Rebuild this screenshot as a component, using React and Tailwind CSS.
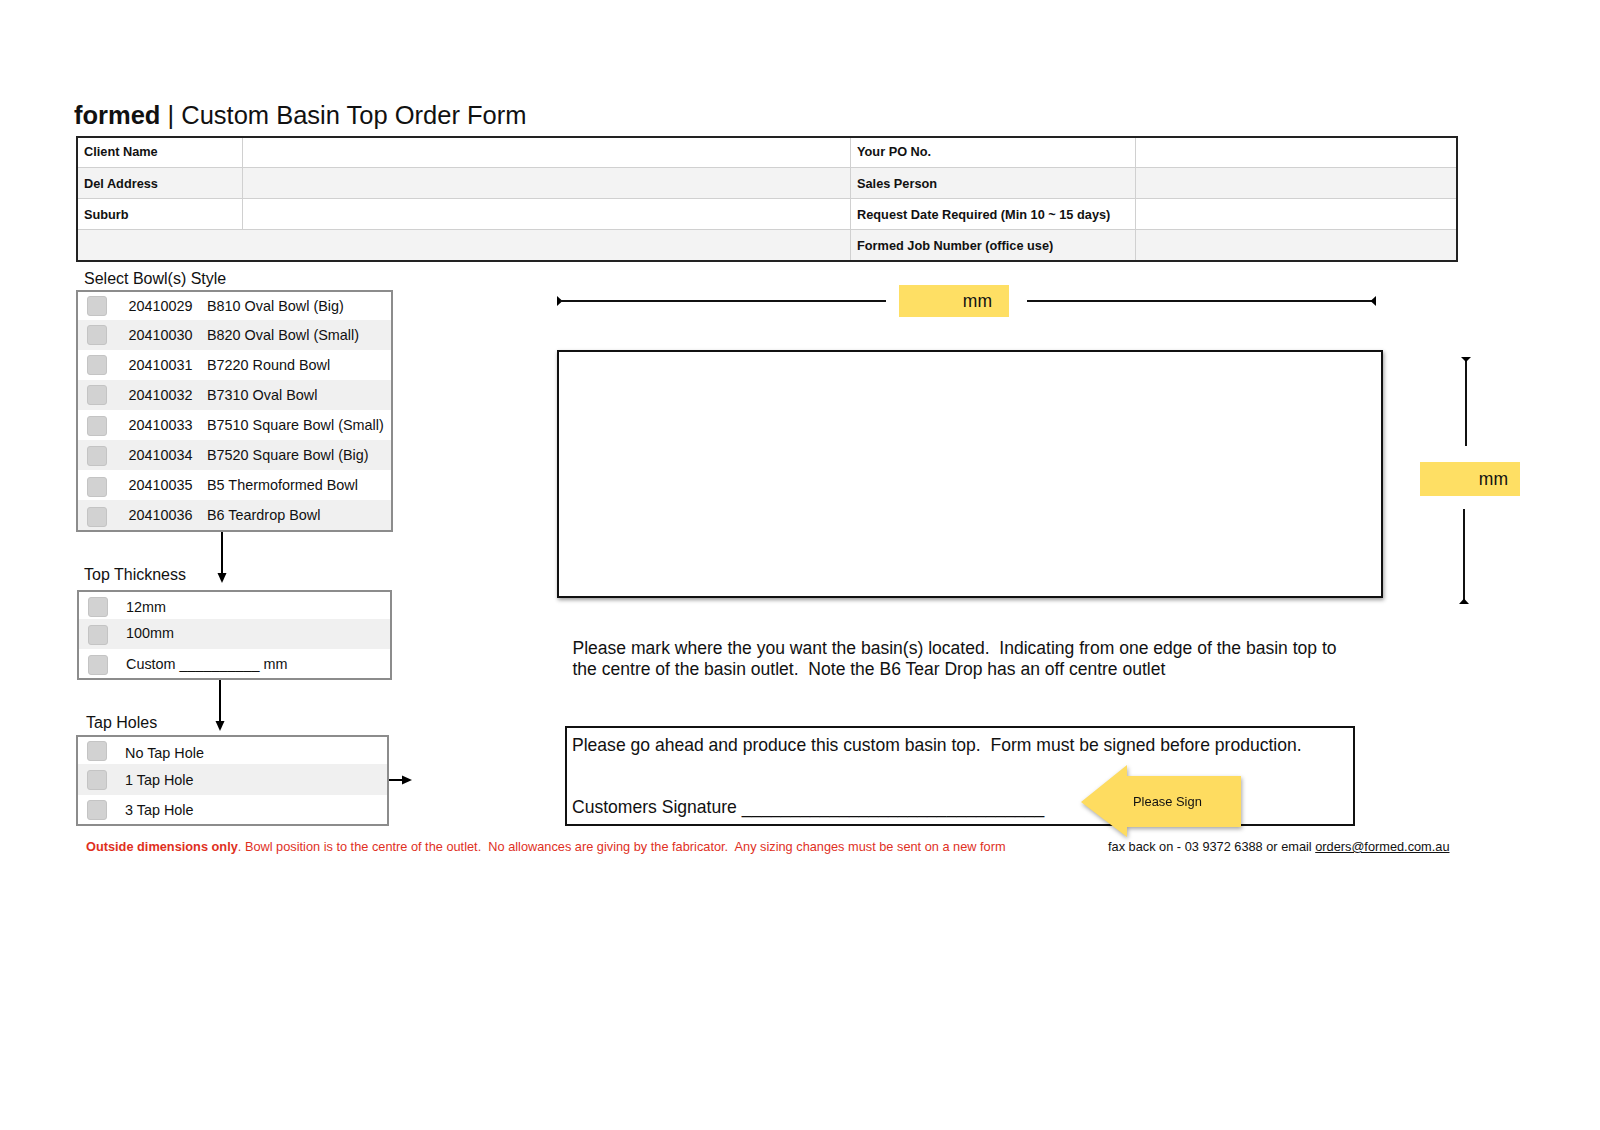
const bowls = [
  { code: '20410029', name: 'B810 Oval Bowl (Big)', h: 'h-[28px]', bg: '', nudge: '' },
  { code: '20410030', name: 'B820 Oval Bowl (Small)', h: 'h-[30px]', bg: 'bg-[#f0f0f0]', nudge: '' },
  { code: '20410031', name: 'B7220 Round Bowl', h: 'h-[30px]', bg: '', nudge: '' },
  { code: '20410032', name: 'B7310 Oval Bowl', h: 'h-[30px]', bg: 'bg-[#f0f0f0]', nudge: '' },
  { code: '20410033', name: 'B7510 Square Bowl (Small)', h: 'h-[30px]', bg: '', nudge: 'mt-px' },
  { code: '20410034', name: 'B7520 Square Bowl (Big)', h: 'h-[30px]', bg: 'bg-[#f0f0f0]', nudge: 'mt-[2px]' },
  { code: '20410035', name: 'B5 Thermoformed Bowl', h: 'h-[30px]', bg: '', nudge: 'mt-[4px]' },
  { code: '20410036', name: 'B6 Teardrop Bowl', h: 'h-[30px]', bg: 'bg-[#f0f0f0]', nudge: 'mt-[4px]' },
];
const info = [
  ['Client Name', 'Your PO No.', '', 'h-[30px]', 'pb-[1px]'],
  ['Del Address', 'Sales Person', 'bg-[#f3f3f3]', 'h-[31px]', 'pt-[2px]'],
  ['Suburb', 'Request Date Required (Min 10 ~ 15 days)', '', 'h-[31px]', 'pt-[1px]'],
  ['', 'Formed Job Number (office use)', 'bg-[#f3f3f3]', 'h-[30px]', 'pt-[1px]'],
];

function Box() {
  return <span className="block w-[20px] h-[20px] shrink-0 rounded-[3px] bg-[#d2d2d2] border border-[#c4c4c4]" />;
}

function Down({ className }) {
  return (
    <svg width="12" height="52" viewBox="0 0 12 52" className={className}>
      <path d="M6 0V43" stroke="#000" strokeWidth="2" />
      <path d="M1.5 41H10.5L6 51Z" fill="#000" />
    </svg>
  );
}

function Option({ label, h, bg, pad, boxNudge, textNudge }) {
  return (
    <div className={`flex items-center ${h} ${bg} ${pad}`}>
      <span className={boxNudge}><Box /></span>
      <span className={`ml-[18px] ${textNudge}`}>{label}</span>
    </div>
  );
}

export default function App() {
  return (
    <div className="w-[1600px] h-[1130px] bg-white pt-[98px] pl-[75px] text-[#111] font-['Liberation_Sans',Arial,sans-serif] overflow-hidden">
      <h1 className="-ml-px text-[25.5px] leading-[34px] h-[38px] font-normal">
        <b>formed</b> | Custom Basin Top Order Form
      </h1>

      <div className="ml-px w-[1382px] border-2 border-[#222] text-[12.75px] font-bold">
        {info.map((r, i) => (
          <div key={i} className={`flex ${r[3]} ${r[2]} ${i < 3 ? 'border-b border-[#d0d0d0]' : ''}`}>
            <div className={`w-[165px] pl-[6px] flex items-center ${r[4]} ${i < 3 ? 'border-r border-[#d0d0d0]' : ''}`}>{r[0]}</div>
            <div className="w-[608px] border-r border-[#d0d0d0]" />
            <div className={`w-[285px] pl-[6px] flex items-center border-r border-[#d0d0d0] ${r[4]}`}>{r[1]}</div>
            <div className="flex-1" />
          </div>
        ))}
      </div>

      <div className="flex">
        <div className="w-[482px] shrink-0 text-[14.4px]">
          <div className="pl-[9px] pt-[8px] h-[28px] text-[16px] leading-[18px]">Select Bowl(s) Style</div>
          <div className="ml-px w-[317px] border-2 border-[#8c8c8c]">
            {bowls.map((b) => (
              <div key={b.code} className={`flex items-center ${b.h} ${b.bg}`}>
                <span className={`ml-[9px] ${b.nudge}`}><Box /></span>
                <span className="ml-[21.5px] w-[78.5px] mt-[2px]">{b.code}</span>
                <span className="mt-[2px]">{b.name}</span>
              </div>
            ))}
          </div>
          <Down className="ml-[141px]" />
          <div className="pl-[9px] -mt-[20px] pt-[2px] h-[26px] text-[16px] leading-[18px]">Top Thickness</div>
          <div className="ml-[2px] w-[315px] border-2 border-[#8c8c8c]">
            <Option label="12mm" h="h-[27px]" bg="" pad="pl-[9px]" boxNudge="mt-[3px]" textNudge="mt-[4px]" />
            <Option label="100mm" h="h-[30px]" bg="bg-[#f0f0f0]" pad="pl-[9px]" boxNudge="mt-[2px]" textNudge="" />
            <Option label="Custom __________ mm" h="h-[29px]" bg="" pad="pl-[9px]" boxNudge="mt-[3px]" textNudge="mt-[2px]" />
          </div>
          <Down className="ml-[139px]" />
          <div className="pl-[11px] -mt-[20px] pt-[2px] h-[23px] text-[16px] leading-[18px]">Tap Holes</div>
          <div className="flex items-center">
            <div className="ml-px w-[313px] h-[91px] border-2 border-[#8c8c8c] shrink-0">
              <Option label="No Tap Hole" h="h-[27px]" bg="" pad="pl-[9px]" boxNudge="" textNudge="mt-[6px]" />
              <Option label="1 Tap Hole" h="h-[31px]" bg="bg-[#f0f0f0]" pad="pl-[9px]" boxNudge="" textNudge="mt-[2px]" />
              <Option label="3 Tap Hole" h="h-[29px]" bg="" pad="pl-[9px]" boxNudge="" textNudge="mt-[3px]" />
            </div>
            <svg width="23" height="12" viewBox="0 0 23 12" className="mb-[2px]">
              <path d="M0 6H15" stroke="#000" strokeWidth="2" />
              <path d="M13 1.5V10.5L23 6Z" fill="#000" />
            </svg>
          </div>
        </div>

        <div className="w-[963px] shrink-0">
          <div className="flex items-center h-[32px] mt-[23px]">
            <svg width="329" height="12" viewBox="0 0 329 12" className="shrink-0">
              <path d="M0 1L5.5 6L0 11Z" fill="#000" />
              <path d="M3 6H329" stroke="#111" strokeWidth="2" />
            </svg>
            <div className="ml-[13px] w-[110px] h-[32px] bg-[#fedf64] flex items-center justify-end pr-[17px] text-[17.5px]">mm</div>
            <svg width="349" height="12" viewBox="0 0 349 12" className="ml-[18px] shrink-0">
              <path d="M0 6H346" stroke="#111" strokeWidth="2" />
              <path d="M349 1V11L343.5 6Z" fill="#000" />
            </svg>
          </div>

          <div className="flex mt-[33px]">
            <div className="w-[826px] h-[248px] border-2 border-[#111] shadow-[1px_2px_4px_rgba(0,0,0,0.4)] shrink-0" />
            <div className="ml-[37px] w-[100px] shrink-0 flex flex-col">
              <svg width="12" height="89" viewBox="0 0 12 89" className="ml-[40px] mt-[7px]">
                <path d="M6 3V89" stroke="#111" strokeWidth="2" />
                <path d="M1 0H11L6 5Z" fill="#000" />
              </svg>
              <div className="mt-[16px] h-[34px] w-[100px] bg-[#fedf64] flex items-center justify-end pr-[12px] text-[17.5px]">mm</div>
              <svg width="12" height="95" viewBox="0 0 12 95" className="ml-[38px] mt-[13px]">
                <path d="M6 0V91" stroke="#111" strokeWidth="2" />
                <path d="M1 95H11L6 89.5Z" fill="#000" />
              </svg>
            </div>
          </div>

          <p className="ml-[15.5px] mt-[34px] w-[820px] text-[17.55px] leading-[20.5px] whitespace-pre-wrap">
            {'Please mark where the you want the basin(s) located.  Indicating from one edge of the basin top to\nthe centre of the basin outlet.  Note the B6 Tear Drop has an off centre outlet'}
          </p>

          <div className="relative ml-[8px] mt-[47px] w-[790px] h-[100px] border-2 border-[#111] pl-[5px] text-[17.56px] leading-[20px] whitespace-pre-wrap">
            <div className="mt-[7px]">Please go ahead and produce this custom basin top.  Form must be signed before production.</div>
            <div className="mt-[42px]">Customers Signature _______________________________</div>
            <div className="absolute left-[514px] top-[37px] w-[160px] h-[72px] drop-shadow-[1px_2px_2px_rgba(0,0,0,0.35)]">
              <svg width="160" height="72" viewBox="0 0 160 72" className="absolute inset-0">
                <path d="M0 37L46 0V11H160V62H46V72Z" fill="#fedc60" />
              </svg>
              <span className="absolute left-[52px] top-[29px] text-[12.9px] leading-[16px]">Please Sign</span>
            </div>
          </div>
        </div>
      </div>

      <div className="flex mt-[13px] text-[12.77px] leading-[16px] whitespace-pre-wrap">
        <div className="ml-[11px] w-[1022px] text-[#e0301e]">
          <b>Outside dimensions only</b>{'. Bowl position is to the centre of the outlet.  No allowances are giving by the fabricator.  Any sizing changes must be sent on a new form'}
        </div>
        <div>fax back on - 03 9372 6388 or email <span className="underline">orders@formed.com.au</span></div>
      </div>
    </div>
  );
}
